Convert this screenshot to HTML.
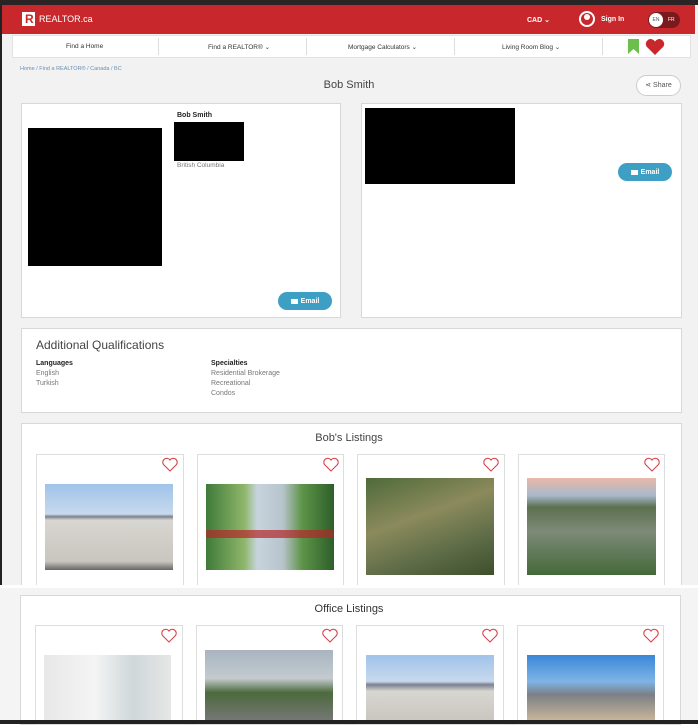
<!DOCTYPE html>
<html><head><meta charset="utf-8">
<style>
*{margin:0;padding:0;box-sizing:border-box}
body{width:698px;height:724px;position:relative;overflow:hidden;background:#fff;font-family:"Liberation Sans",sans-serif;color:#333}
.a{position:absolute}
.card{position:absolute;background:#fff;border:1px solid #d8d8d8}
.btn{position:absolute;background:#3e9fc4;color:#fff;border-radius:10px;font-size:7px;font-weight:bold;display:flex;align-items:center;justify-content:center;gap:3px}
.btn i{display:inline-block;width:7px;height:5px;background:#fff}
.nav{font-size:6.5px;color:#333;top:43px}
.lc{position:absolute;background:#fff;border:1px solid #ddd}
.sm{font-size:7px;color:#777;line-height:10px}
</style></head><body>
<div class="a" style="left:0;top:0;width:698px;height:586px;background:#f2f2f2;border-left:2px solid #222"></div>
<div class="a" style="left:0;top:0;width:698px;height:5px;background:#2a2424"></div>
<div class="a" style="left:2px;top:5px;width:693px;height:29px;background:#c8282b"></div>
<div class="a" style="left:22px;top:12px;width:13px;height:14px;background:#fff"></div>
<div class="a" style="left:25px;top:13px;font-size:12px;font-weight:bold;color:#c8282b;line-height:12px">R</div>
<div class="a" style="left:39px;top:14px;font-size:9px;color:#fff">REALTOR.ca</div>
<div class="a" style="left:527px;top:16px;font-size:7px;color:#fff;font-weight:bold">CAD ⌄</div>
<div class="a" style="left:579px;top:11px;width:16px;height:16px;border:2px solid #fff;border-radius:50%"></div>
<div class="a" style="left:584px;top:14px;width:6px;height:6px;background:#fff;border-radius:50%"></div>
<div class="a" style="left:601px;top:16px;font-size:7px;color:#fff;font-weight:bold">Sign In</div>
<div class="a" style="left:648px;top:12px;width:32px;height:16px;background:#7a1a1c;border-radius:8px"></div>
<div class="a" style="left:649px;top:13px;width:14px;height:14px;background:#fff;border-radius:50%;font-size:5px;text-align:center;line-height:14px;color:#555">EN</div>
<div class="a" style="left:668px;top:17px;font-size:5px;color:#fff">FR</div>
<div class="a" style="left:12px;top:35px;width:679px;height:23px;background:#fff;border:1px solid #e2e2e2"></div>
<div class="a nav" style="left:66px">Find a Home</div>
<div class="a nav" style="left:208px">Find a REALTOR® ⌄</div>
<div class="a nav" style="left:348px">Mortgage Calculators ⌄</div>
<div class="a nav" style="left:502px">Living Room Blog ⌄</div>
<div class="a" style="left:158px;top:38px;width:1px;height:17px;background:#ddd"></div>
<div class="a" style="left:306px;top:38px;width:1px;height:17px;background:#ddd"></div>
<div class="a" style="left:454px;top:38px;width:1px;height:17px;background:#ddd"></div>
<div class="a" style="left:602px;top:38px;width:1px;height:17px;background:#ddd"></div>
<svg class="a" style="left:628px;top:39px" width="11" height="15"><path d="M0 0H11V15L5.5 10L0 15Z" fill="#6cbf4a"/></svg>
<svg class="a" style="left:645px;top:39px" width="20" height="16"><path d="M10 16L1.5 7.5A4.8 4.8 0 0 1 10 2.5A4.8 4.8 0 0 1 18.5 7.5Z" fill="#c8282b"/></svg>
<div class="a" style="left:20px;top:66px;font-size:5.5px;color:#6a8fb0">Home / Find a REALTOR® / Canada / BC</div>
<div class="a" style="left:0;width:698px;top:79px;text-align:center;font-size:11px;color:#444">Bob Smith</div>
<div class="a" style="left:636px;top:75px;width:45px;height:21px;background:#fff;border:1px solid #ccc;border-radius:11px;font-size:7px;color:#555;text-align:center;line-height:19px">⋖ Share</div>

<div class="card" style="left:21px;top:103px;width:320px;height:215px"></div>
<div class="a" style="left:28px;top:128px;width:134px;height:138px;background:#000"></div>
<div class="a" style="left:177px;top:112px;font-size:7px;font-weight:bold;color:#222">Bob Smith</div>
<div class="a" style="left:174px;top:122px;width:70px;height:39px;background:#000"></div>
<div class="a" style="left:177px;top:162px;font-size:6.5px;color:#777">British Columbia</div>
<div class="btn" style="left:278px;top:292px;width:54px;height:18px"><i></i>Email</div>
<div class="card" style="left:361px;top:103px;width:321px;height:215px"></div>
<div class="a" style="left:365px;top:108px;width:150px;height:76px;background:#000"></div>
<div class="btn" style="left:618px;top:163px;width:54px;height:18px"><i></i>Email</div>

<div class="card" style="left:21px;top:328px;width:661px;height:85px"></div>
<div class="a" style="left:36px;top:338px;font-size:12px;color:#444">Additional Qualifications</div>
<div class="a sm" style="left:36px;top:359px"><b style="color:#222">Languages</b><br>English<br>Turkish</div>
<div class="a sm" style="left:211px;top:359px"><b style="color:#222">Specialties</b><br>Residential Brokerage<br>Recreational<br>Condos</div>

<div class="card" style="left:21px;top:423px;width:661px;height:170px"></div>
<div class="a" style="left:0;width:698px;top:432px;text-align:center;font-size:11px;color:#444">Bob's Listings</div>

<div class="lc" style="left:36px;top:454px;width:148px;height:140px"></div>
<div class="lc" style="left:197px;top:454px;width:147px;height:140px"></div>
<div class="lc" style="left:357px;top:454px;width:148px;height:140px"></div>
<div class="lc" style="left:518px;top:454px;width:147px;height:140px"></div>
<div class="a" style="left:45px;top:484px;width:128px;height:86px;background:linear-gradient(#9fc3ea 0%,#c8d9ec 35%,#7a8090 38%,#d8d6d0 42%,#c9c6c0 90%,#666 100%)"></div>
<div class="a" style="left:206px;top:484px;width:128px;height:86px;background:linear-gradient(90deg,#3f7a3a,#8fb66a 30%,#c7d4dd 40%,#b8c4cc 60%,#5e9448 75%,#2d5f2a);"></div>
<div class="a" style="left:206px;top:530px;width:128px;height:8px;background:#b3262a;opacity:.7"></div>
<div class="a" style="left:366px;top:478px;width:128px;height:97px;background:linear-gradient(160deg,#4f6a3a,#8b8a5c 40%,#5f6d48 70%,#3e4f2c)"></div>
<div class="a" style="left:527px;top:478px;width:129px;height:97px;background:linear-gradient(#e8b8a8 0%,#a9b9cc 18%,#5c7050 30%,#7d8a78 55%,#44693a 100%)"></div>

<div class="a" style="left:0;top:585px;width:698px;height:3px;background:#fff"></div>
<div class="a" style="left:0;top:588px;width:698px;height:134px;background:#f4f4f4"></div>
<div class="card" style="left:20px;top:595px;width:661px;height:130px"></div>
<div class="a" style="left:0;width:698px;top:603px;text-align:center;font-size:11px;color:#333">Office Listings</div>
<div class="lc" style="left:35px;top:625px;width:148px;height:100px"></div>
<div class="lc" style="left:196px;top:625px;width:147px;height:100px"></div>
<div class="lc" style="left:356px;top:625px;width:148px;height:100px"></div>
<div class="lc" style="left:517px;top:625px;width:147px;height:100px"></div>
<div class="a" style="left:44px;top:655px;width:127px;height:66px;background:linear-gradient(90deg,#e8e8e8,#f4f4f4 40%,#cfd8da 70%,#e6e6e6)"></div>
<div class="a" style="left:205px;top:650px;width:128px;height:71px;background:linear-gradient(#a8b4bf 0%,#c4cbd0 40%,#4c6a3c 60%,#777 100%)"></div>
<div class="a" style="left:366px;top:655px;width:128px;height:66px;background:linear-gradient(#9fc3ea 0%,#c8d9ec 40%,#7a8090 45%,#d8d6d0 55%,#c9c6c0 100%)"></div>
<div class="a" style="left:527px;top:655px;width:128px;height:66px;background:linear-gradient(#3a86d8 0%,#7fb4e6 40%,#7c7f86 60%,#cbb79a 100%)"></div>
<div class="a" style="left:0;top:720px;width:698px;height:4px;background:#222"></div>

<svg class="a" style="left:0;top:0" width="698" height="724">
<g fill="none" stroke="#d9444a" stroke-width="1.1">
<path id="h" d="M170 471L163.5 464.5A3.6 3.6 0 0 1 170 460A3.6 3.6 0 0 1 176.5 464.5Z"/>
<use href="#h" x="161"/><use href="#h" x="321"/><use href="#h" x="482"/>
<use href="#h" x="-1" y="171"/><use href="#h" x="160" y="171"/><use href="#h" x="320" y="171"/><use href="#h" x="481" y="171"/>
</g>
</svg>
</body></html>
